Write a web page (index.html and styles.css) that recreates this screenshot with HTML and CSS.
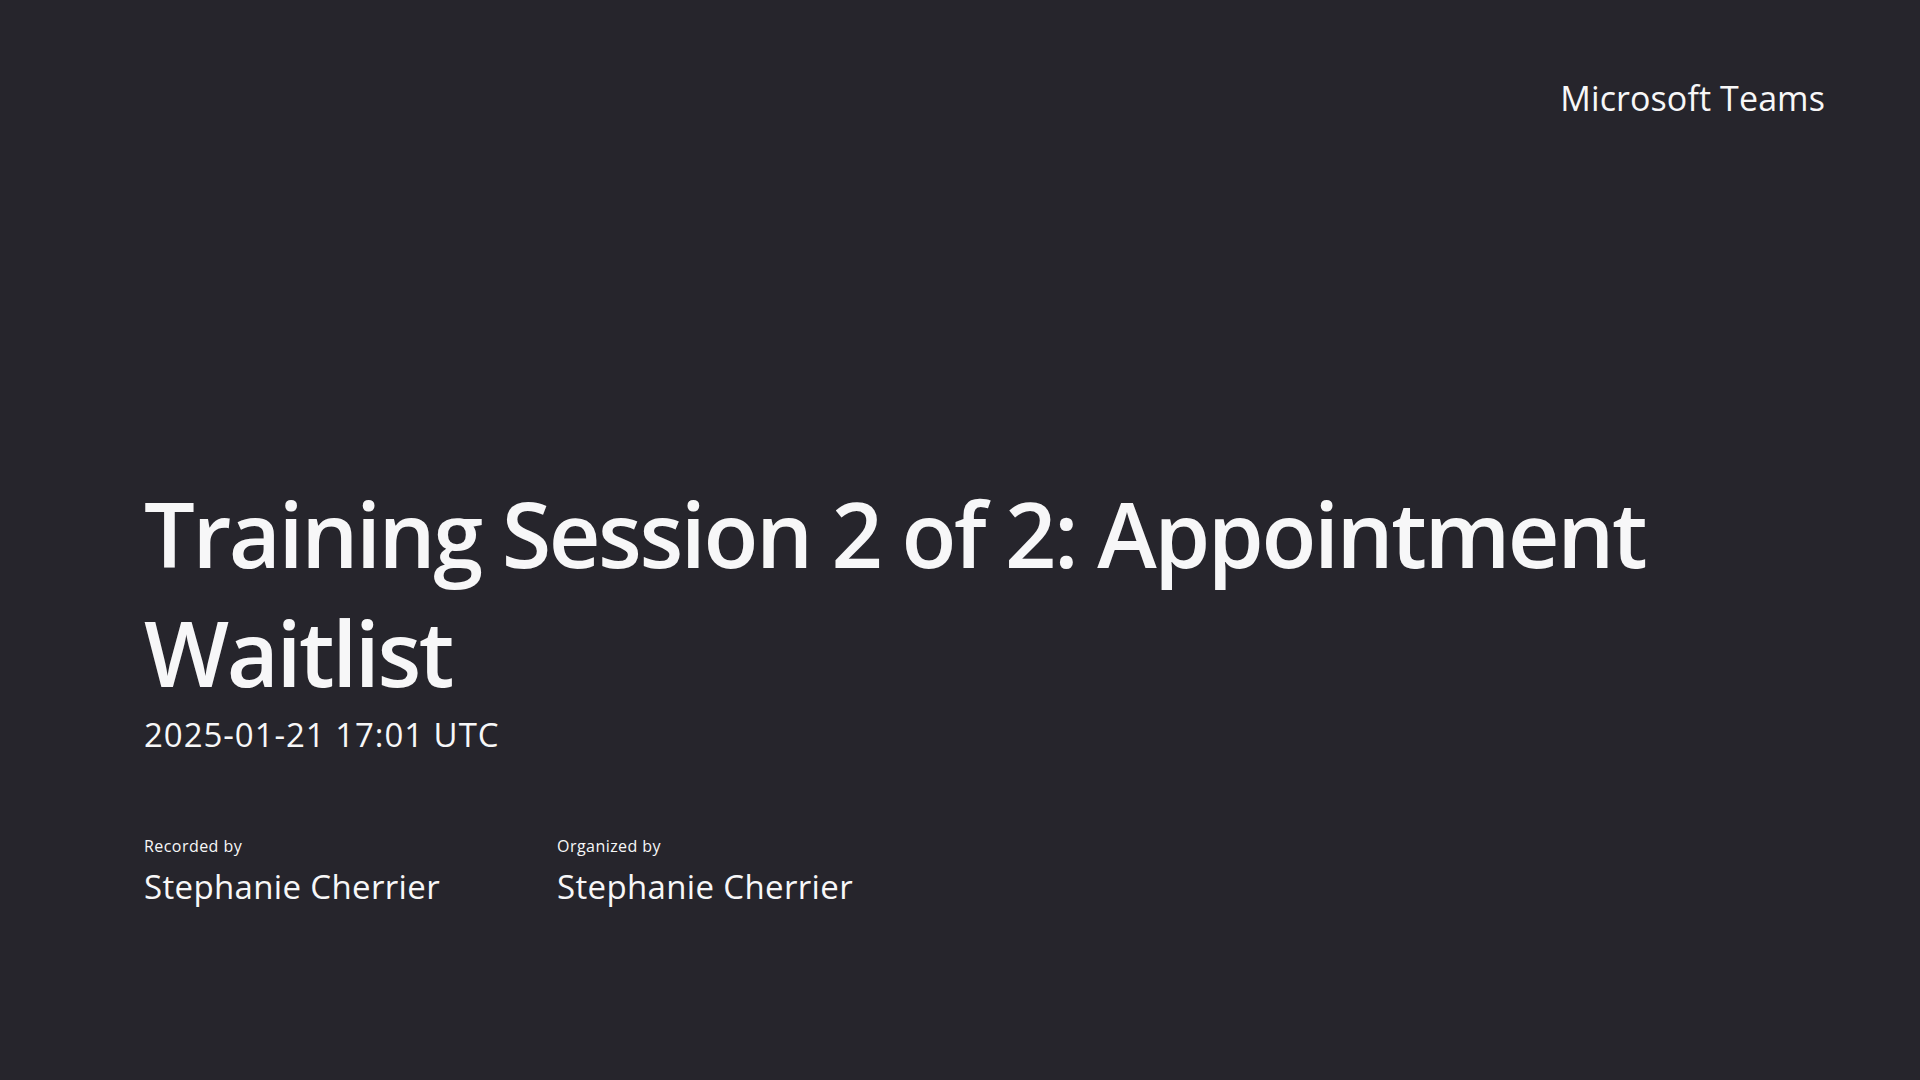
FILE: index.html
```html
<!DOCTYPE html>
<html lang="en">
<head>
    <meta charset="UTF-8">
    <meta name="viewport" content="width=device-width, initial-scale=1.0">
    <title>Training Session 2 of 2: Appointment Waitlist</title>
    <link rel="stylesheet" href="styles.css">
</head>
<body>
    <div class="slide">
        <header class="brand">Microsoft Teams</header>

        <main class="meeting">
            <h1 class="meeting-title">Training Session 2 of 2: Appointment Waitlist</h1>
            <p class="meeting-date">2025-01-21 17:01 UTC</p>

            <div class="people">
                <div class="person">
                    <span class="person-label">Recorded by</span>
                    <span class="person-name">Stephanie Cherrier</span>
                </div>
                <div class="person">
                    <span class="person-label">Organized by</span>
                    <span class="person-name">Stephanie Cherrier</span>
                </div>
            </div>
        </main>
    </div>
</body>
</html>
```

FILE: styles.css
```css
* {
    margin: 0;
    padding: 0;
    box-sizing: border-box;
}

html, body {
    height: 100%;
}

body {
    font-family: 'Open Sans', 'Noto Sans', sans-serif;
    background: #26252c;
    color: #f7f7f8;
    overflow: hidden;
}

.slide {
    height: 1080px;
    padding: 75px 95px 0 144px;
    display: flex;
    flex-direction: column;
}

.brand {
    align-self: flex-end;
    font-size: 34px;
    line-height: 46px;
    letter-spacing: 0.1px;
}

.meeting {
    margin-top: 353px;
}

.meeting-title {
    font-size: 90px;
    font-weight: 600;
    line-height: 119px;
    letter-spacing: -2.45px;
    max-width: 1560px;
}

.meeting-date {
    font-size: 33px;
    line-height: 46px;
    letter-spacing: 0.95px;
}

.people {
    display: flex;
    gap: 117px;
    margin-top: 77px;
}

.person {
    display: flex;
    flex-direction: column;
    gap: 7px;
}

.person-label {
    font-size: 16px;
    line-height: 22px;
    letter-spacing: 0.45px;
}

.person-name {
    font-size: 33px;
    line-height: 46px;
    letter-spacing: 0.35px;
}
```
